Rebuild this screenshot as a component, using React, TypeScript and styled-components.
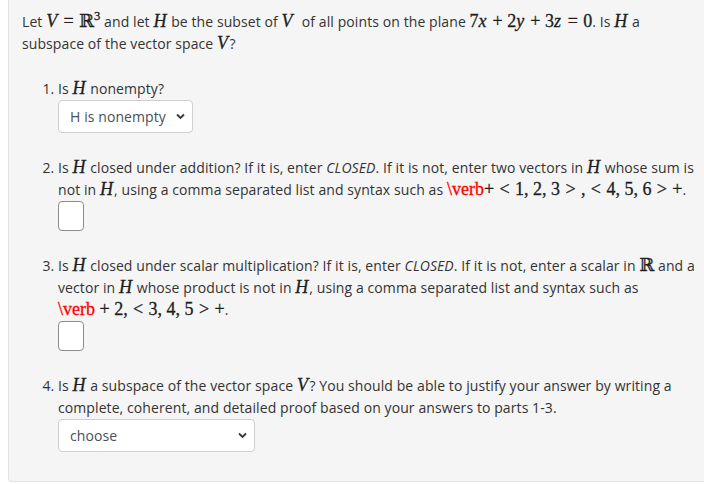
import React from "react";
import styled, { createGlobalStyle } from "styled-components";

const GlobalStyle = createGlobalStyle`
  html, body { margin: 0; padding: 0; background: #ffffff; }
  body {
    font-family: "Open Sans", "Noto Sans", sans-serif;
    font-size: 14px;
    letter-spacing: 0.09px;
    color: #333333;
    overflow: hidden;
  }
`;

const Page = styled.div`
  padding: 0 0 2px 8px;
  width: 704px;
  box-sizing: border-box;
  overflow: hidden;
`;

const Well = styled.div`
  background: #f5f5f5;
  border: 1px solid #e3e3e3;
  border-top: 0;
  border-right: 0;
  border-radius: 0 0 0 4px;
  padding: 11px 4px 29px 13px;
  line-height: 22px;
`;

const Intro = styled.p`
  margin: 0 0 23px 0;
`;

const List = styled.ol`
  margin: 0;
  padding: 0 0 0 36px;
`;

const Item = styled.li`
  margin-bottom: 24px;
  &:last-child { margin-bottom: 0; }
`;

const Para = styled.div``;

const Tex = styled.span`
  white-space: nowrap;
  font-family: "Liberation Serif", "DejaVu Serif", serif;
  font-size: 18px;
  line-height: 0;
  letter-spacing: 0;
  color: #1e1e1e;
  -webkit-text-stroke: 0.3px #1e1e1e;
`;

const Var = styled.span<{ $pad?: number }>`
  font-style: italic;
  padding-right: ${(p) => p.$pad ?? 1.5}px;
`;

const Bin = styled.span`
  padding: 0 0.25em;
`;

const Rel = styled.span`
  padding: 0 0.3em;
`;

const Err = styled.span`
  color: #ff0000;
  -webkit-text-stroke: 0.3px #ff0000;
`;

const Sup = styled.sup`
  font-size: 0.7em;
  line-height: 0;
  vertical-align: 0.55em;
`;

const Em = styled.em`
  font-style: italic;
`;

const SelectBox = styled.div<{ $w: number }>`
  display: flex;
  align-items: center;
  justify-content: space-between;
  box-sizing: border-box;
  width: ${(p) => p.$w}px;
  height: 33px;
  padding: 0 7px 0 11px;
  background: #ffffff;
  border: 1px solid #cfcfcf;
  border-radius: 4px;
  color: #495057;
  font-size: 14px;
`;

const AnswerBox = styled.div`
  width: 26px;
  height: 30px;
  box-sizing: border-box;
  border: 1.5px solid #8c8c8c;
  border-radius: 4px;
  background: #ffffff;
`;

const Chevron = () => (
  <svg width="9" height="7" viewBox="0 0 9 7">
    <path d="M1 1.5 L4.5 5 L8 1.5" fill="none" stroke="#343a40" strokeWidth="1.9" />
  </svg>
);

const V = ({ pad = 5.5 }: { pad?: number }) => (
  <Tex>
    <Var $pad={pad}>V</Var>
  </Tex>
);
const H = () => (
  <Tex>
    <Var $pad={1}>H</Var>
  </Tex>
);

export default function App() {
  return (
    <>
      <GlobalStyle />
      <Page>
        <Well>
          <Intro>
            Let{" "}
            <Tex>
              <Var $pad={1}>V</Var>
              <Rel>=</Rel>ℝ<Sup>3</Sup>
            </Tex>{" "}
            and let <H /> be the subset of <V /> of all points on the plane{" "}
            <Tex>
              7<Var>x</Var>
              <Bin>+</Bin>2<Var>y</Var>
              <Bin>+</Bin>3<Var>z</Var>
              <Rel>=</Rel>0
            </Tex>
            . Is <H /> a subspace of the vector space <V pad={1.5} />?
          </Intro>
          <List>
            <Item>
              <Para>
                Is <H /> nonempty?
              </Para>
              <SelectBox $w={135}>
                <span>H is nonempty</span>
                <Chevron />
              </SelectBox>
            </Item>
            <Item>
              <Para>
                Is <H /> closed under addition? If it is, enter <Em>CLOSED</Em>. If it is not, enter two vectors in <H /> whose sum is not in <H />, using a comma separated list and syntax such as{" "}
                <Tex>
                  <Err>\verb</Err>+<Rel>&lt;</Rel>1, 2, 3<Rel>&gt;</Rel>,<Rel>&lt;</Rel>4, 5, 6<Rel>&gt;</Rel>+
                </Tex>
                .
              </Para>
              <AnswerBox />
            </Item>
            <Item>
              <Para>
                Is <H /> closed under scalar multiplication? If it is, enter <Em>CLOSED</Em>. If it is not, enter a scalar in <Tex>ℝ</Tex> and a vector in <H /> whose product is not in <H />, using a comma separated list and syntax such as{" "}
                <Tex>
                  <Err>\verb</Err>
                  <Bin>+</Bin>2,<Rel>&lt;</Rel>3, 4, 5<Rel>&gt;</Rel>+
                </Tex>
                .
              </Para>
              <AnswerBox />
            </Item>
            <Item>
              <Para>
                Is <H /> a subspace of the vector space <V pad={1.5} />? You should be able to justify your answer by writing a complete, coherent, and detailed proof based on your answers to parts 1-3.
              </Para>
              <SelectBox $w={197}>
                <span>choose</span>
                <Chevron />
              </SelectBox>
            </Item>
          </List>
        </Well>
      </Page>
    </>
  );
}
